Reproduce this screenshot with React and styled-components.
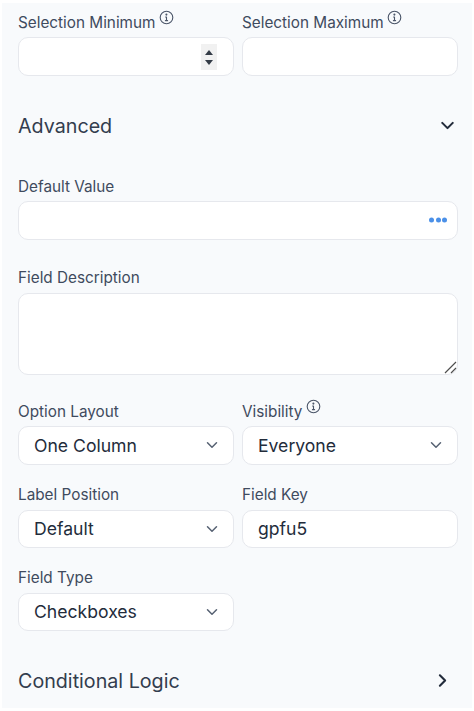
import React from "react";
import styled, { createGlobalStyle } from "styled-components";
import { ChevronDown, ChevronRight } from "lucide-react";

const Global = createGlobalStyle`
  html, body { margin: 0; padding: 0; background: #fff; }
  * { box-sizing: border-box; }
`;

const Page = styled.div`
  width: 474px;
  height: 711px;
  overflow: hidden;
  padding: 3px 2px 3px 2px;
  font-family: Inter, "Liberation Sans", sans-serif;
`;

const Panel = styled.div`
  height: 705px;
  background: #f8fafc;
  padding: 0 15px 0 16px;
  display: flex;
  flex-direction: column;
`;

const Row = styled.div`
  display: grid;
  grid-template-columns: ${(p) => (p.$single ? "440px" : "216px 216px")};
  gap: 8px;
  margin-top: ${(p) => p.$top}px;
`;

const Field = styled.div`
  display: flex;
  flex-direction: column;
  min-width: 0;
`;

const Label = styled.div`
  height: 16px;
  padding-top: 1px;
  margin-bottom: 7px;
  display: flex;
  align-items: center;
  font-size: 15.3px;
  line-height: 16px;
  color: #3f4b5e;
  white-space: nowrap;
`;

const InfoIcon = styled.svg`
  width: 15px;
  height: 15px;
  margin: -11px 0 0 3.5px;
  flex: none;
  fill: none;
  stroke: #4a5568;
  stroke-width: 1.1;
  stroke-linecap: round;
`;

const Box = styled.div`
  position: relative;
  height: ${(p) => p.$h || 38.5}px;
  background: #fff;
  border: 1px solid #e6e8ed;
  border-radius: 10px;
  display: flex;
  align-items: center;
  padding: 0 15px;
  font-size: 17.6px;
  color: #232c3b;
`;

const SelectChevron = styled(ChevronDown)`
  position: absolute;
  right: 12px;
  top: 50%;
  width: 18px;
  height: 18px;
  transform: translateY(-50%);
  color: #566172;
  stroke-width: 2;
`;

const Spinner = styled.div`
  position: absolute;
  right: 16px;
  top: 6px;
  width: 16px;
  height: 26px;
  background: #f1f1f1;
  display: flex;
  flex-direction: column;
  align-items: center;
  justify-content: center;
  gap: 5px;
`;

const Arrow = styled.div`
  width: 0;
  height: 0;
  border-left: 4.5px solid transparent;
  border-right: 4.5px solid transparent;
  ${(p) => (p.$up ? "border-bottom" : "border-top")}: 5px solid #333b46;
`;

const Dots = styled.div`
  position: absolute;
  right: 10px;
  top: 50%;
  transform: translateY(-50%);
  display: flex;
  gap: 1.5px;
`;

const Dot = styled.span`
  width: 5px;
  height: 5px;
  border-radius: 50%;
  background: #4b90e8;
`;

const Grip = styled.svg`
  position: absolute;
  right: 0;
  bottom: 0;
  width: 13px;
  height: 13px;
  stroke: #4f4f4f;
  stroke-width: 1.2;
`;

const Section = styled.div`
  display: flex;
  align-items: center;
  justify-content: space-between;
  height: 24px;
  margin-top: ${(p) => p.$top}px;
  font-size: 19.7px;
  color: #333d4e;
`;

const SectionChevron = styled.span`
  display: flex;
  color: #232c3b;
  margin-right: ${(p) => p.$mr}px;
  svg { width: 21px; height: 21px; stroke-width: 2.4; }
`;

const Info = () => (
  <InfoIcon viewBox="0 0 15 15">
    <circle cx="7.5" cy="7.5" r="6.3" />
    <path d="M7.5 7v3.6M6.4 10.6h2.2M6.6 7h.9" />
    <circle cx="7.4" cy="4.6" r=".5" />
  </InfoIcon>
);

const Select = ({ children }) => (
  <Box>
    {children}
    <SelectChevron />
  </Box>
);

export default function App() {
  return (
    <Page>
      <Global />
      <Panel>
        <Row $top={11}>
          <Field>
            <Label>Selection Minimum<Info /></Label>
            <Box $h={39}>
              <Spinner><Arrow $up /><Arrow /></Spinner>
            </Box>
          </Field>
          <Field>
            <Label>Selection Maximum<Info /></Label>
            <Box $h={39} />
          </Field>
        </Row>
        <Section $top={37.5}>
          Advanced
          <SectionChevron $mr={-1}><ChevronDown /></SectionChevron>
        </Section>
        <Row $top={40.5} $single>
          <Field>
            <Label>Default Value</Label>
            <Box><Dots><Dot /><Dot /><Dot /></Dots></Box>
          </Field>
        </Row>
        <Row $top={30} $single>
          <Field>
            <Label>Field Description</Label>
            <Box $h={82.5}>
              <Grip viewBox="0 0 13 13"><path d="M1 12 12 1M7 12l5-5" /></Grip>
            </Box>
          </Field>
        </Row>
        <Row $top={28}>
          <Field>
            <Label>Option Layout</Label>
            <Select>One Column</Select>
          </Field>
          <Field>
            <Label>Visibility<Info /></Label>
            <Select>Everyone</Select>
          </Field>
        </Row>
        <Row $top={22}>
          <Field>
            <Label>Label Position</Label>
            <Select>Default</Select>
          </Field>
          <Field>
            <Label>Field Key</Label>
            <Box>gpfu5</Box>
          </Field>
        </Row>
        <Row $top={21.5}>
          <Field>
            <Label>Field Type</Label>
            <Select>Checkboxes</Select>
          </Field>
        </Row>
        <Section $top={37.5}>
          Conditional Logic
          <SectionChevron $mr={4}><ChevronRight /></SectionChevron>
        </Section>
      </Panel>
    </Page>
  );
}
